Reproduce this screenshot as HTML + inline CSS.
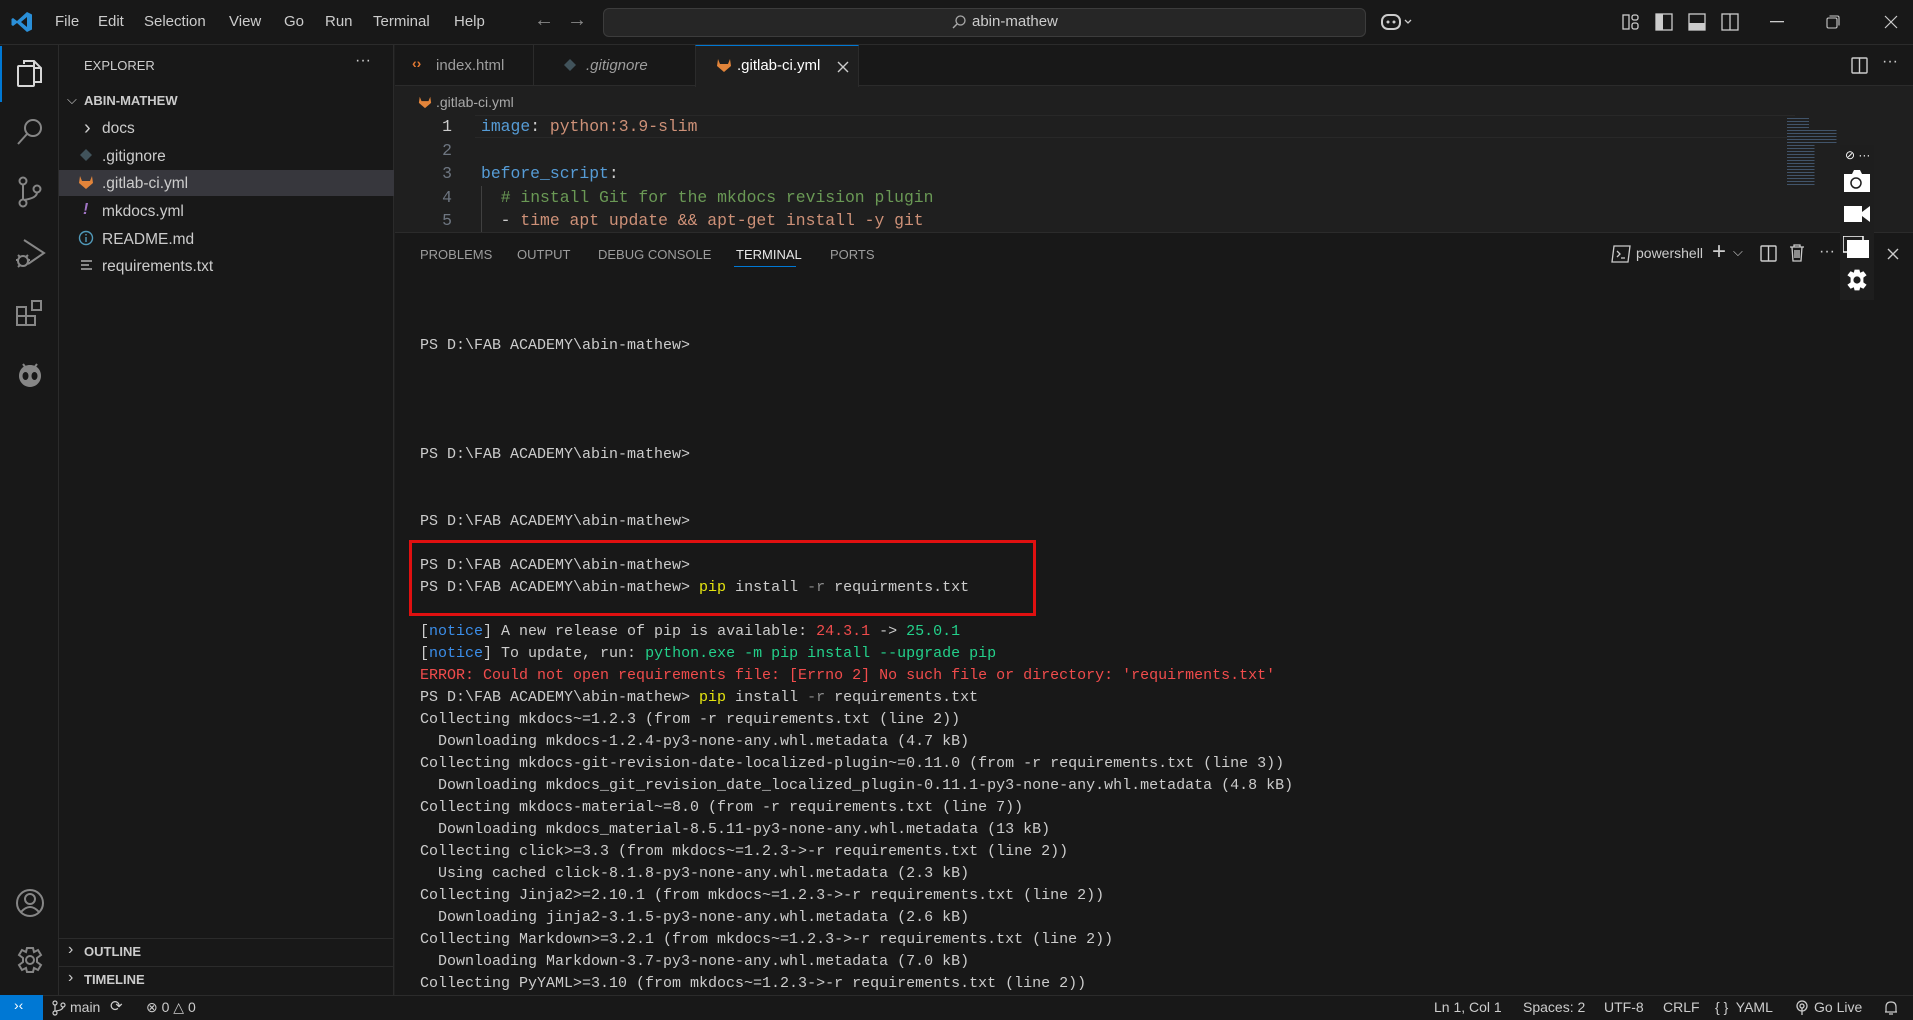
<!DOCTYPE html>
<html><head><meta charset="utf-8"><style>
*{margin:0;padding:0;box-sizing:border-box}
body{width:1913px;height:1020px;background:#1f1f1f;font-family:"Liberation Sans",sans-serif;color:#ccc;position:relative;overflow:hidden}
.a{position:absolute;white-space:pre}
.m{font-family:"Liberation Mono",monospace}
.ui{font-size:15px;color:#ccc}
svg{position:absolute}
</style></head><body>
<!-- title bar -->
<div class="a" style="left:0;top:0;width:1913px;height:45px;background:#181818;border-bottom:1px solid #2b2b2b"></div>
<svg style="left:10px;top:10px" width="24" height="24" viewBox="0 0 24 24"><path d="M17 2 L22 4.5 V19.5 L17 22 L7 13 L3 16 L1.5 15 V9 L3 8 L7 11 L17 2Z M17 7 L11 12 L17 17Z" fill="#2a8fd8"/></svg>
<div class="a ui" style="left:55px;top:13px">File</div>
<div class="a ui" style="left:98px;top:13px">Edit</div>
<div class="a ui" style="left:144px;top:13px">Selection</div>
<div class="a ui" style="left:229px;top:13px">View</div>
<div class="a ui" style="left:284px;top:13px">Go</div>
<div class="a ui" style="left:325px;top:13px">Run</div>
<div class="a ui" style="left:373px;top:13px">Terminal</div>
<div class="a ui" style="left:454px;top:13px">Help</div>
<div class="a" style="left:534px;top:9px;font-size:20px;color:#888">←</div>
<div class="a" style="left:567px;top:9px;font-size:20px;color:#888">→</div>
<div class="a" style="left:603px;top:8px;width:763px;height:29px;background:#262626;border:1px solid #3c3c3c;border-radius:6px"></div>
<svg style="left:951px;top:14px" width="16" height="16" viewBox="0 0 16 16"><circle cx="9.5" cy="6.5" r="4.5" fill="none" stroke="#aaa" stroke-width="1.3"/><path d="M6 10 L2 14" stroke="#aaa" stroke-width="1.4"/></svg>
<div class="a ui" style="left:972px;top:13px">abin-mathew</div>
<svg style="left:1380px;top:11px" width="36" height="22" viewBox="0 0 36 22"><rect x="2" y="4" width="18" height="14" rx="6" fill="none" stroke="#ccc" stroke-width="2"/><circle cx="8" cy="11" r="1.5" fill="#ccc"/><circle cx="14" cy="11" r="1.5" fill="#ccc"/><path d="M25 9 l3 3 l3 -3" stroke="#ccc" fill="none" stroke-width="1.3"/></svg>
<svg style="left:1622px;top:13px" width="18" height="18" viewBox="0 0 18 18" fill="none" stroke="#ccc" stroke-width="1.3"><rect x="1" y="2" width="6" height="14"/><rect x="10" y="2" width="6" height="5" rx="2"/><rect x="10" y="10" width="6" height="6" rx="2"/></svg>
<svg style="left:1655px;top:13px" width="18" height="18" viewBox="0 0 18 18"><rect x="1" y="1" width="16" height="16" fill="none" stroke="#ccc" stroke-width="1.3"/><rect x="1" y="1" width="7" height="16" fill="#ccc"/></svg>
<svg style="left:1688px;top:13px" width="18" height="18" viewBox="0 0 18 18"><rect x="1" y="1" width="16" height="16" fill="none" stroke="#ccc" stroke-width="1.3"/><rect x="1" y="10" width="16" height="7" fill="#ccc"/></svg>
<svg style="left:1721px;top:13px" width="18" height="18" viewBox="0 0 18 18" fill="none" stroke="#ccc" stroke-width="1.3"><rect x="1" y="1" width="16" height="16"/><path d="M9 1V17"/></svg>
<svg style="left:1770px;top:21px" width="14" height="2"><rect width="14" height="1.3" fill="#ccc"/></svg>
<svg style="left:1826px;top:15px" width="14" height="14" fill="none" stroke="#ccc" stroke-width="1.1"><rect x="1" y="3" width="10" height="10" rx="1.5"/><path d="M3.5 1H11.5Q13 1 13 2.5V10.5"/></svg>
<svg style="left:1884px;top:15px" width="14" height="14" stroke="#ccc" stroke-width="1.2"><path d="M1 1L13 13M13 1L1 13"/></svg>

<!-- activity bar -->
<div class="a" style="left:0;top:45px;width:59px;height:950px;background:#181818;border-right:1px solid #2b2b2b"></div>
<div class="a" style="left:0;top:46px;width:2px;height:56px;background:#0078d4"></div>
<svg style="left:15px;top:57px" width="30" height="32" viewBox="0 0 30 32" fill="none" stroke="#d7d7d7" stroke-width="2"><path d="M9 7V4H19L26 11V25H20"/><rect x="3" y="9" width="16" height="20" rx="1"/><path d="M19 4V11H26"/></svg>
<svg style="left:15px;top:117px" width="30" height="30" fill="none" stroke="#868686" stroke-width="2"><circle cx="18" cy="11" r="8"/><path d="M12 17L3 27"/></svg>
<svg style="left:16px;top:176px" width="28" height="32" fill="none" stroke="#868686" stroke-width="2"><circle cx="7" cy="5" r="3.5"/><circle cx="7" cy="27" r="3.5"/><circle cx="21" cy="13" r="3.5"/><path d="M7 8.5V23.5M21 16.5Q21 22 8 24"/></svg>
<svg style="left:14px;top:236px" width="32" height="34" fill="none" stroke="#868686" stroke-width="2"><path d="M10 4L30 17L14 28"/><circle cx="9" cy="25" r="5"/><path d="M2 24H4M14 24H16M4 19L6 21M14 19L12 21M4 31L6 29"/></svg>
<svg style="left:15px;top:299px" width="30" height="30" fill="none" stroke="#868686" stroke-width="2"><rect x="2" y="8" width="9" height="9"/><rect x="2" y="17" width="9" height="9"/><rect x="11" y="17" width="9" height="9"/><rect x="17" y="2" width="9" height="9"/></svg>
<svg style="left:15px;top:360px" width="30" height="30" viewBox="0 0 30 30"><path d="M15 5C8 5 4 10 4 16C4 22 9 27 15 27C21 27 26 22 26 16C26 10 22 5 15 5Z" fill="#868686"/><path d="M8 4L11 8M22 4L19 8" stroke="#868686" stroke-width="2"/><ellipse cx="10.5" cy="16" rx="3" ry="4" fill="#181818"/><ellipse cx="19.5" cy="16" rx="3" ry="4" fill="#181818"/></svg>
<svg style="left:15px;top:888px" width="30" height="30" fill="none" stroke="#868686" stroke-width="2"><circle cx="15" cy="15" r="13"/><circle cx="15" cy="11" r="5"/><path d="M6 24Q15 14 24 24"/></svg>
<svg style="left:15px;top:945px" width="30" height="30" viewBox="0 0 30 30" fill="none" stroke="#868686" stroke-width="2"><circle cx="15" cy="15" r="4"/><path d="M12 3H18L19 7L23 5L26 10L22 13V17L26 20L23 25L19 23L18 27H12L11 23L7 25L4 20L8 17V13L4 10L7 5L11 7Z"/></svg>

<!-- sidebar -->
<div class="a" style="left:59px;top:45px;width:335px;height:950px;background:#181818;border-right:1px solid #2b2b2b"></div>
<div class="a" style="left:84px;top:58px;font-size:13px;color:#ccc">EXPLORER</div>
<div class="a" style="left:355px;top:52px;font-size:16px;color:#ccc">···</div>
<div class="a" style="left:67px;top:92px;font-size:13px;color:#ccc">⌵</div>
<div class="a" style="left:84px;top:93px;font-size:13px;font-weight:bold;color:#ccc">ABIN-MATHEW</div>
<div class="a" style="left:59px;top:170px;width:335px;height:26px;background:#37373d"></div>
<div class="a ui" style="left:84px;top:119px;font-size:20px;color:#ccc;line-height:18px">›</div>
<div class="a ui" style="left:102px;top:120px;font-size:15.5px">docs</div>
<svg style="left:79px;top:148px" width="14" height="14"><path d="M7 1L13 7L7 13L1 7Z" fill="#41535b"/></svg>
<div class="a ui" style="left:102px;top:148px;font-size:15.5px">.gitignore</div>
<svg style="left:78px;top:174px" width="16" height="16" viewBox="0 0 16 16"><path d="M8 15L1 9L2 2L4 7H12L14 2L15 9Z" fill="#e2843a"/></svg>
<div class="a ui" style="left:102px;top:175px;font-size:15.5px">.gitlab-ci.yml</div>
<div class="a" style="left:83px;top:201px;font-size:16px;font-weight:bold;color:#a074c4;font-style:italic">!</div>
<div class="a ui" style="left:102px;top:203px;font-size:15.5px">mkdocs.yml</div>
<svg style="left:78px;top:230px" width="16" height="16" fill="none" stroke="#519aba" stroke-width="1.4"><circle cx="8" cy="8" r="6.5"/><path d="M8 7V12M8 4V5.5"/></svg>
<div class="a ui" style="left:102px;top:231px;font-size:15.5px">README.md</div>
<svg style="left:81px;top:259px" width="12" height="12" stroke="#ccc" stroke-width="1.3"><path d="M0 2H11M0 6H8M0 10H11"/></svg>
<div class="a ui" style="left:102px;top:258px;font-size:15.5px">requirements.txt</div>
<div class="a" style="left:59px;top:938px;width:335px;height:1px;background:#2b2b2b"></div>
<div class="a" style="left:59px;top:966px;width:335px;height:1px;background:#2b2b2b"></div>
<div class="a" style="left:68px;top:941px;font-size:16px">›</div>
<div class="a" style="left:84px;top:944px;font-size:13px;font-weight:bold">OUTLINE</div>
<div class="a" style="left:68px;top:969px;font-size:16px">›</div>
<div class="a" style="left:84px;top:972px;font-size:13px;font-weight:bold">TIMELINE</div>

<!-- tabs -->
<div class="a" style="left:395px;top:45px;width:1518px;height:41px;background:#181818;border-bottom:1px solid #2b2b2b"></div>
<div class="a" style="left:533px;top:45px;width:1px;height:41px;background:#2b2b2b"></div>
<div class="a" style="left:695px;top:45px;width:164px;height:42px;background:#1f1f1f;border-top:1px solid #0078d4;border-left:1px solid #2b2b2b;border-right:1px solid #2b2b2b"></div>
<div class="a" style="left:412px;top:55px;font-size:14px;color:#e37933;font-weight:bold">‹›</div>
<div class="a ui" style="left:436px;top:57px;color:#9d9d9d">index.html</div>
<svg style="left:564px;top:59px" width="12" height="12"><path d="M6 0L12 6L6 12L0 6Z" fill="#41535b"/></svg>
<div class="a ui" style="left:586px;top:57px;color:#9d9d9d;font-style:italic">.gitignore</div>
<svg style="left:716px;top:57px" width="16" height="16" viewBox="0 0 16 16"><path d="M8 15L1 9L2 2L4 7H12L14 2L15 9Z" fill="#e2843a"/></svg>
<div class="a ui" style="left:737px;top:57px;color:#fff">.gitlab-ci.yml</div>
<svg style="left:837px;top:61px" width="12" height="12" stroke="#ccc" stroke-width="1.4"><path d="M1 1L11 11M11 1L1 11"/></svg>
<svg style="left:1851px;top:57px" width="17" height="17" fill="none" stroke="#ccc" stroke-width="1.4"><rect x="1" y="1" width="15" height="15" rx="1"/><path d="M8.5 1V16"/></svg>
<div class="a" style="left:1882px;top:53px;font-size:16px">···</div>
<!-- breadcrumb -->
<svg style="left:418px;top:95px" width="14" height="14" viewBox="0 0 16 16"><path d="M8 15L1 9L2 2L4 7H12L14 2L15 9Z" fill="#e2843a"/></svg>
<div class="a ui" style="left:436px;top:94px;font-size:14px;color:#a9a9a9">.gitlab-ci.yml</div>
<!-- code -->
<div class="a" style="left:475px;top:115px;width:1320px;height:23px;border-top:1px solid #282828;border-bottom:1px solid #282828"></div>
<div class="a m" style="left:434px;top:115px;font-size:16.4px;line-height:23.5px;color:#6e7681;text-align:right;width:18px"><span style="color:#ccc">1</span>
2
3
4
5</div>
<div class="a" style="left:481px;top:186px;width:1px;height:46px;background:#404040"></div>
<div class="a m" style="left:481px;top:115px;font-size:16.4px;line-height:23.5px;color:#ccc"><span style="color:#569cd6">image</span>: <span style="color:#ce9178">python:3.9-slim</span>

<span style="color:#569cd6">before_script</span>:
  <span style="color:#6a9955"># install Git for the mkdocs revision plugin</span>
  - <span style="color:#ce9178">time apt update &amp;&amp; apt-get install -y git</span></div>
<!-- minimap -->
<div class="a" style="left:1787px;top:116px;width:55px;height:70px;opacity:.55;background:repeating-linear-gradient(#1f1f1f 0 2px,#5d7fa8 2px 3px);clip-path:polygon(0 0,40% 0,40% 20%,90% 20%,90% 40%,50% 40%,50% 100%,0 100%)"></div>

<!-- panel -->
<div class="a" style="left:395px;top:232px;width:1518px;height:763px;background:#181818;border-top:1px solid #2b2b2b"></div>
<div class="a" style="left:420px;top:247px;font-size:13px;color:#9d9d9d">PROBLEMS</div>
<div class="a" style="left:517px;top:247px;font-size:13px;color:#9d9d9d">OUTPUT</div>
<div class="a" style="left:598px;top:247px;font-size:13px;color:#9d9d9d">DEBUG CONSOLE</div>
<div class="a" style="left:736px;top:247px;font-size:13px;color:#e7e7e7">TERMINAL</div>
<div class="a" style="left:734px;top:266px;width:62px;height:1px;background:#0078d4"></div>
<div class="a" style="left:830px;top:247px;font-size:13px;color:#9d9d9d">PORTS</div>
<svg style="left:1611px;top:244px" width="20" height="20" fill="none" stroke="#ccc" stroke-width="1.3"><path d="M3 2H19L17 18H1Z"/><path d="M6 7L9 10L6 13M10 14H14"/></svg>
<div class="a ui" style="left:1636px;top:245px;font-size:14px">powershell</div>
<div class="a" style="left:1712px;top:238px;font-size:24px;color:#ccc">+</div>
<div class="a" style="left:1733px;top:244px;font-size:13px;color:#ccc">⌵</div>
<svg style="left:1760px;top:245px" width="17" height="17" fill="none" stroke="#ccc" stroke-width="1.4"><rect x="1" y="1" width="15" height="15" rx="1"/><path d="M8.5 1V16"/></svg>
<svg style="left:1789px;top:244px" width="16" height="18" fill="none" stroke="#ccc" stroke-width="1.3"><path d="M1 3H15M5 3V1H11V3M3 3L4 17H12L13 3M6 6V14M8 6V14M10 6V14"/></svg>
<div class="a" style="left:1819px;top:243px;font-size:16px">···</div>
<svg style="left:1887px;top:248px" width="12" height="12" stroke="#ccc" stroke-width="1.4"><path d="M1 1L11 11M11 1L1 11"/></svg>
<!-- floating toolbar -->
<div class="a" style="left:1840px;top:145px;width:34px;height:155px;background:#1e1e1e"></div>
<div class="a" style="left:1845px;top:148px;font-size:12px;color:#fff">⊘ ···</div>
<svg style="left:1844px;top:170px" width="26" height="22"><path d="M0 4H8L10 0H16L18 4H26V22H0Z" fill="#fff"/><circle cx="12" cy="13" r="5" fill="none" stroke="#1e1e1e" stroke-width="1.5"/></svg>
<svg style="left:1844px;top:205px" width="26" height="18"><rect x="0" y="1" width="18" height="16" fill="#fff"/><path d="M18 7L26 1V17L18 11Z" fill="#fff"/></svg>
<svg style="left:1843px;top:236px" width="26" height="22"><rect x="0" y="0" width="20" height="16" fill="none" stroke="#fff" stroke-width="1.5"/><rect x="4" y="4" width="22" height="18" fill="#fff"/></svg>
<svg style="left:1845px;top:268px" width="24" height="24" viewBox="0 0 30 30"><path d="M12 2H18L19 6L23 4L27 9L23 12V18L27 21L23 26L19 24L18 28H12L11 24L7 26L3 21L7 18V12L3 9L7 4L11 6Z" fill="#fff"/><circle cx="15" cy="15" r="4.5" fill="#1e1e1e"/></svg>

<!-- terminal text -->
<div class="a m" style="left:420px;top:335px;font-size:15px;line-height:22px;color:#ccc">PS D:\FAB ACADEMY\abin-mathew&gt;</div>
<div class="a m" style="left:420px;top:444px;font-size:15px;line-height:22px;color:#ccc">PS D:\FAB ACADEMY\abin-mathew&gt;</div>
<div class="a m" style="left:420px;top:511px;font-size:15px;line-height:22px;color:#ccc">PS D:\FAB ACADEMY\abin-mathew&gt;</div>
<div class="a" style="left:409px;top:540px;width:627px;height:76px;border:3px solid #e01010"></div>
<div class="a m" style="left:420px;top:555px;font-size:15px;line-height:22px;color:#ccc">PS D:\FAB ACADEMY\abin-mathew&gt;
PS D:\FAB ACADEMY\abin-mathew&gt; <span style="color:#e5e510">pip</span> install <span style="color:#8b8b8b">-r</span> requirments.txt</div>
<div class="a m" style="left:420px;top:621px;font-size:15px;line-height:22px;color:#ccc">[<span style="color:#3b8eea">notice</span>] A new release of pip is available: <span style="color:#f14c4c">24.3.1</span> -&gt; <span style="color:#23d18b">25.0.1</span>
[<span style="color:#3b8eea">notice</span>] To update, run: <span style="color:#23d18b">python.exe -m pip install --upgrade pip</span>
<span style="color:#f14c4c">ERROR: Could not open requirements file: [Errno 2] No such file or directory: 'requirments.txt'</span>
PS D:\FAB ACADEMY\abin-mathew&gt; <span style="color:#e5e510">pip</span> install <span style="color:#8b8b8b">-r</span> requirements.txt
Collecting mkdocs~=1.2.3 (from -r requirements.txt (line 2))
  Downloading mkdocs-1.2.4-py3-none-any.whl.metadata (4.7 kB)
Collecting mkdocs-git-revision-date-localized-plugin~=0.11.0 (from -r requirements.txt (line 3))
  Downloading mkdocs_git_revision_date_localized_plugin-0.11.1-py3-none-any.whl.metadata (4.8 kB)
Collecting mkdocs-material~=8.0 (from -r requirements.txt (line 7))
  Downloading mkdocs_material-8.5.11-py3-none-any.whl.metadata (13 kB)
Collecting click&gt;=3.3 (from mkdocs~=1.2.3-&gt;-r requirements.txt (line 2))
  Using cached click-8.1.8-py3-none-any.whl.metadata (2.3 kB)
Collecting Jinja2&gt;=2.10.1 (from mkdocs~=1.2.3-&gt;-r requirements.txt (line 2))
  Downloading jinja2-3.1.5-py3-none-any.whl.metadata (2.6 kB)
Collecting Markdown&gt;=3.2.1 (from mkdocs~=1.2.3-&gt;-r requirements.txt (line 2))
  Downloading Markdown-3.7-py3-none-any.whl.metadata (7.0 kB)
Collecting PyYAML&gt;=3.10 (from mkdocs~=1.2.3-&gt;-r requirements.txt (line 2))</div>

<!-- status bar -->
<div class="a" style="left:0;top:995px;width:1913px;height:25px;background:#181818;border-top:1px solid #2b2b2b"></div>
<div class="a" style="left:0;top:995px;width:43px;height:25px;background:#0078d4"></div>
<div class="a" style="left:14px;top:997px;font-size:14px;color:#fff">›‹</div>
<svg style="left:52px;top:1000px" width="14" height="16" fill="none" stroke="#ccc" stroke-width="1.2"><circle cx="3" cy="3" r="2"/><circle cx="3" cy="13" r="2"/><circle cx="11" cy="5" r="2"/><path d="M3 5V11M11 7Q11 10 4 11"/></svg>
<div class="a ui" style="left:70px;top:999px;font-size:14px">main</div>
<div class="a" style="left:110px;top:997px;font-size:15px">⟳</div>
<div class="a ui" style="left:146px;top:999px;font-size:14px">⊗ 0 △ 0</div>
<div class="a ui" style="left:1434px;top:999px;font-size:14px">Ln 1, Col 1</div>
<div class="a ui" style="left:1523px;top:999px;font-size:14px">Spaces: 2</div>
<div class="a ui" style="left:1604px;top:999px;font-size:14px">UTF-8</div>
<div class="a ui" style="left:1663px;top:999px;font-size:14px">CRLF</div>
<div class="a ui" style="left:1715px;top:999px;font-size:14px">{ }  YAML</div>
<svg style="left:1795px;top:1000px" width="14" height="16" fill="none" stroke="#ccc" stroke-width="1.3"><circle cx="7" cy="6" r="5"/><circle cx="7" cy="6" r="2"/><path d="M7 8V15"/></svg>
<div class="a ui" style="left:1814px;top:999px;font-size:14px">Go Live</div>
<svg style="left:1884px;top:1000px" width="14" height="16" fill="none" stroke="#ccc" stroke-width="1.2"><path d="M2 12V7Q2 2 7 2Q12 2 12 7V12H2ZM1 12H13M5 14H9"/></svg>
</body></html>
